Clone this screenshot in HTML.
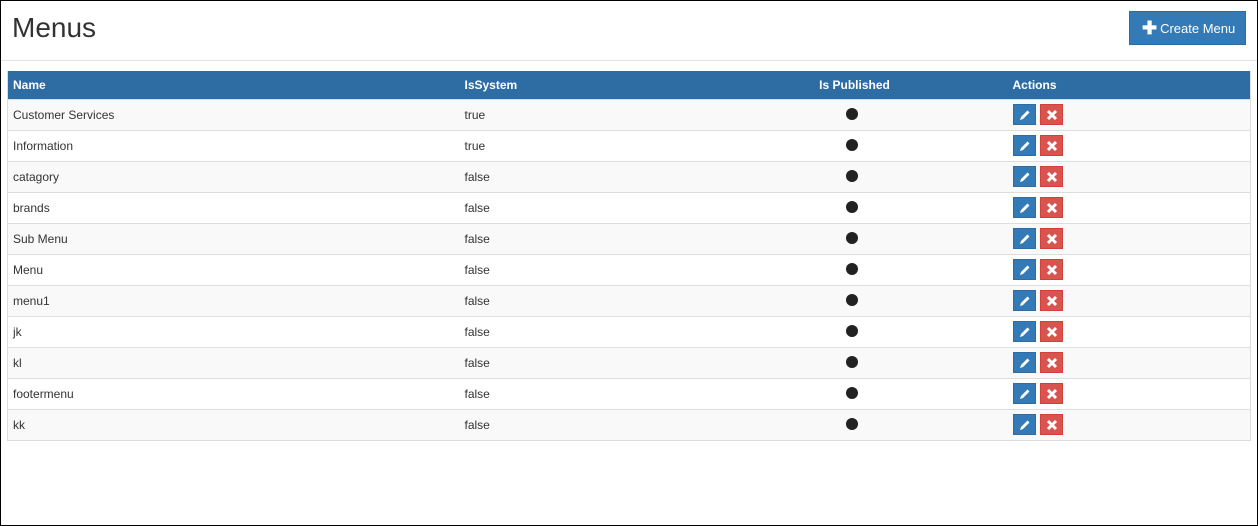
<!DOCTYPE html>
<html><head><style>
*{box-sizing:border-box;margin:0;padding:0}
body{width:1258px;height:526px;background:#fff;font-family:"Liberation Sans",sans-serif;color:#333;position:relative;overflow:hidden}
.frame{position:absolute;left:0;top:0;width:1258px;height:526px;border:1px solid #000}
h1{position:absolute;left:12px;top:12px;font-size:28px;font-weight:normal;color:#333}
.hr{position:absolute;left:1px;right:1px;top:60px;border-top:1px solid #e3e3e3}
.btn{position:absolute;left:1129px;top:11px;width:117px;height:34px;background:#337ab7;border:1px solid #2e6da4;color:#fff;font-size:13px;line-height:32px;padding-left:12px}
.btn b{font-size:18px;vertical-align:-1px;margin-right:3px}
table{position:absolute;left:7px;top:71px;width:1244px;border-collapse:collapse;font-size:12px}
th{background:#2e6da4;color:#fff;text-align:left;height:28px;padding-left:5px;font-weight:bold}
td{height:31px;padding-left:5px;border-top:1px solid #ddd;color:#333}
tr:nth-child(odd) td{background:#f9f9f9}
tr:last-child td{border-bottom:1px solid #ddd}
table{border-left:1px solid #ddd;border-right:1px solid #ddd}
.c{text-align:center;padding-left:0}
.dot{display:inline-block;width:12px;height:12px;border-radius:50%;background:#222;vertical-align:middle;position:relative;top:-2px;left:-3px}
.a{display:inline-block;width:23px;height:21px;vertical-align:middle;margin-right:4px;position:relative;top:-1px}
.e{background:#337ab7;border:1px solid #2e6da4}
.d{background:#d9534f;border:1px solid #d43f3a}
.a svg{position:absolute;left:5px;top:4px}
</style></head><body>
<div class="frame"></div>
<h1>Menus</h1>
<div class="btn"><b>✚</b>Create Menu</div>
<div class="hr"></div>
<table>
<tr><th style="width:452px">Name</th><th style="width:300px">IsSystem</th><th class="c" style="width:190px">Is Published</th><th style="padding-left:63px">Actions</th></tr>
</table>
<table style="top:99px">
<tbody id="b"></tbody>
</table>
<script>
var rows=[["Customer Services","true"],["Information","true"],["catagory","false"],["brands","false"],["Sub Menu","false"],["Menu","false"],["menu1","false"],["jk","false"],["kl","false"],["footermenu","false"],["kk","false"]];
var h="";
rows.forEach(function(r){h+='<tr><td style="width:452px">'+r[0]+'</td><td style="width:300px">'+r[1]+'</td><td class="c" style="width:190px"><span class="dot"></span></td><td style="padding-left:63px"><span class="a e"><svg width="12" height="12" viewBox="0 0 12 12"><path d="M1 11 L2 8 L8.5 1.5 L10.5 3.5 L4 10 Z" fill="#fff"/></svg></span><span class="a d"><svg width="12" height="12" viewBox="0 0 12 12"><path d="M2 2 L10 10 M10 2 L2 10" stroke="#fff" stroke-width="3"/></svg></span></td></tr>';});
document.getElementById("b").innerHTML=h;
</script>
</body></html>
